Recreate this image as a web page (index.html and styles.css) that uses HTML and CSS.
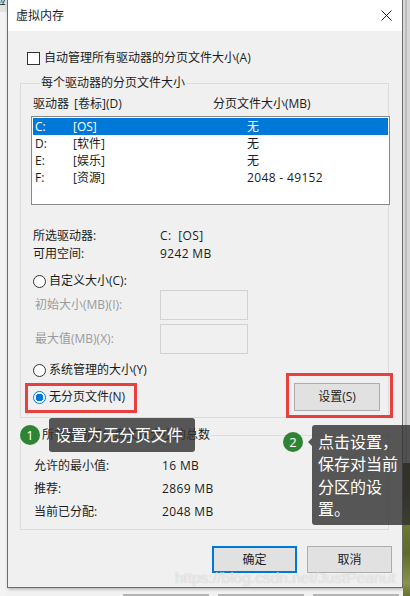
FILE: index.html
```html
<!DOCTYPE html>
<html lang="zh-CN">
<head>
<meta charset="utf-8">
<title>虚拟内存</title>
<link rel="stylesheet" href="styles.css">
</head>
<body>
<div class="page">
  <div class="strip-left"><span class="behind-glyph">检</span></div>
  <div class="center">
    <div class="dialog">
      <div class="titlebar">
        <span>虚拟内存</span>
        <svg class="close" width="11" height="11" viewBox="0 0 11 11"><path d="M.5 .5L10.500 10.500M10.500 .5L.5 10.500" fill="none" stroke="#222" stroke-width="1"/></svg>
      </div>
      <div class="content">
        <label class="check-row"><span class="checkbox"></span>自动管理所有驱动器的分页文件大小(A)</label>
        <fieldset class="group group-a">
          <legend>每个驱动器的分页文件大小</legend>
          <div class="list-head"><span>驱动器 [卷标](D)</span><span>分页文件大小(MB)</span></div>
          <div class="listbox">
            <div class="drive selected"><span>C:</span><span>[OS]</span><span>无</span></div>
            <div class="drive"><span>D:</span><span>[软件]</span><span>无</span></div>
            <div class="drive"><span>E:</span><span>[娱乐]</span><span>无</span></div>
            <div class="drive"><span>F:</span><span>[资源]</span><span>2048 - 49152</span></div>
          </div>
          <div class="info first"><span>所选驱动器:</span><span>C:&nbsp; [OS]</span></div>
          <div class="info"><span>可用空间:</span><span>9242 MB</span></div>
          <div class="radio-row custom"><span class="radio"></span>自定义大小(C):</div>
          <div class="size-row top"><span>初始大小(MB)(I):</span><span class="input"></span></div>
          <div class="size-row"><span>最大值(MB)(X):</span><span class="input"></span></div>
          <div class="radio-row system"><span class="radio"></span>系统管理的大小(Y)</div>
          <div class="last-row">
            <div class="radio-row"><span class="radio on"></span>无分页文件(N)</div>
            <button class="btn set-btn" type="button">设置(S)</button>
          </div>
        </fieldset>
        <fieldset class="group group-b">
          <legend>所有驱动器分页文件大小的总数</legend>
          <div class="total"><span>允许的最小值:</span><span>16 MB</span></div>
          <div class="total"><span>推荐:</span><span>2869 MB</span></div>
          <div class="total"><span>当前已分配:</span><span>2048 MB</span></div>
        </fieldset>
        <div class="actions">
          <button class="btn ok" type="button">确定</button>
          <button class="btn" type="button">取消</button>
        </div>
      </div>
    </div>
    <div class="taskrow"><i></i><i></i><i></i></div>
  </div>
  <div class="strip-right"><div class="strip-light"></div><div class="strip-photo"></div></div>

  <div class="mark mark-radio"></div>
  <div class="mark mark-set"></div>
  <div class="badge badge-1">1</div>
  <div class="tip tip-1">设置为无分页文件</div>
  <div class="badge badge-2">2</div>
  <div class="tip tip-2">点击设置，<br>保存对当前<br>分区的设<br>置。</div>
  <div class="watermark">https://blog.csdn.net/JustPeanut</div>
</div>
</body>
</html>
```
FILE: styles.css
```css
* { box-sizing: border-box; }
html, body { margin: 0; padding: 0; }
body {
  width: 410px;
  height: 596px;
  overflow: hidden;
  background: #f1f1f1;
  font: 12px/16px "Open Sans", "Noto Sans CJK SC", sans-serif;
  color: #1c1c1c;
}
.page {
  position: relative;
  width: 410px;
  height: 596px;
  overflow: hidden;
  display: grid;
  grid-template-columns: 7px 396px 7px;
}
.strip-left {
  background: linear-gradient(#e3e3e3 0 12px, #f3f3f3 12px);
  overflow: hidden;
}
.behind-glyph {
  display: block;
  margin: -5px 0 0 -6px;
  width: 13px;
  font-size: 12px;
  line-height: 12px;
  color: #222;
}
.center { display: flex; flex-direction: column; }
.dialog {
  height: 588px;
  background: #f0f0f0;
  border: 1px solid #6d6d6d;
  border-top: 0;
  box-shadow: 1px 1px 3px rgba(0, 0, 0, .3);
}
.titlebar {
  height: 31px;
  background: #fff;
  padding: 0 10px 0 8px;
  display: flex;
  align-items: center;
  justify-content: space-between;
  line-height: 30px;
}
.close { display: block; }
.content { padding: 20px 13px 0 12px; }
.check-row {
  display: flex;
  align-items: center;
  height: 14px;
  padding-left: 7px;
  gap: 4px;
}
.checkbox {
  width: 13px;
  height: 13px;
  background: #fff;
  border: 1px solid #333;
}
.group {
  margin: 0;
  min-width: 0;
  width: 369px;
  border: 1px solid #dcdcdc;
  padding: 0 8px 6px 12px;
}
.group legend {
  margin-left: 7px;
  padding: 0 1px 0 1px;
  line-height: 16px;
}
.group-a { margin-top: 10px; height: 343px; }
.group-b { margin-top: 9px; height: 103px; padding: 11px 8px 0 13px; }
.list-head {
  display: grid;
  grid-template-columns: 180px 1fr;
  margin-top: 5px;
  height: 16px;
  word-spacing: 2px;
}
.listbox {
  margin: 4px 0 0 -2px;
  width: 359px;
  height: 89px;
  background: #fff;
  border: 1px solid #868a8f;
  padding: 1px;
}
.drive {
  display: grid;
  grid-template-columns: 38px 174px 1fr;
  height: 17px;
  padding-left: 2px;
  line-height: 17px;
}
.drive span:last-child,
.info span:last-child,
.total span:last-child { letter-spacing: .35px; }
.drive.selected { background: #0078d7; color: #fff; }
.info {
  display: grid;
  grid-template-columns: 127px 1fr;
  height: 18px;
  line-height: 18px;
}
.info.first { margin-top: 22px; }
.radio-row {
  display: flex;
  align-items: center;
  gap: 3px;
  height: 16px;
}
.radio-row.custom { margin-top: 10px; }
.radio-row.system { margin-top: 8px; }
.radio {
  width: 13px;
  height: 13px;
  background: #fff;
  border: 1px solid #333;
  border-radius: 50%;
  flex: none;
}
.radio.on {
  border-color: #0078d7;
  background: radial-gradient(circle, #0078d7 0 3.6px, #fff 4px);
}
.size-row {
  display: flex;
  align-items: center;
  justify-content: space-between;
  width: 215px;
  height: 30px;
  margin-top: 4px;
  padding-left: 2px;
  color: #9b9b9b;
}
.size-row.top { margin-top: 1px; }
.input {
  width: 88px;
  height: 30px;
  background: #f0f0f0;
  border: 1px solid #d2d2d2;
}
.last-row {
  display: flex;
  align-items: center;
  justify-content: space-between;
  height: 28px;
  margin-top: 5px;
}
.btn {
  font: inherit;
  color: inherit;
  width: 85px;
  height: 27px;
  margin: 0;
  padding: 0;
  background: #e1e1e1;
  border: 1px solid #adadad;
}
.set-btn { width: 86px; height: 28px; }
.btn.ok { border: 2px solid #0078d7; }
.total {
  display: grid;
  grid-template-columns: 128px 1fr;
  height: 23px;
  line-height: 23px;
}
.actions {
  display: flex;
  justify-content: flex-end;
  gap: 10px;
  margin: 16px -3px 0 0;
}
.taskrow {
  display: flex;
  gap: 9px;
  padding: 6px 0 0 116px;
}
.taskrow i {
  width: 86px;
  height: 2px;
  background: #b4b4b4;
}
.strip-right { display: flex; flex-direction: column; }
.strip-light {
  height: 463px;
  background: linear-gradient(90deg, #d8d8d8 0 2px, #bdbdbd 2px 4px, #d6d6d6 4px);
}
.strip-photo {
  flex: 1;
  background: linear-gradient(#3d3a0c 0, #454511 30px, #6b7a2a 60px, #5d6b28 90px, #8b9448 120px, #67712e 133px);
}
.mark {
  position: absolute;
  border: 3px solid #e8403f;
}
.mark-radio { left: 25px; top: 383px; width: 112px; height: 30px; }
.mark-set { left: 286px; top: 373px; width: 107px; height: 45px; }
.badge {
  position: absolute;
  width: 20px;
  height: 20px;
  border-radius: 50%;
  background: #2e8435;
  color: #fff;
  text-align: center;
  line-height: 20px;
  font-size: 13px;
}
.badge-1 { left: 20px; top: 425px; }
.badge-2 { left: 283px; top: 432px; }
.tip {
  position: absolute;
  background: rgba(48, 48, 48, .8);
  color: #fff;
  font-size: 16px;
  border-radius: 3px;
}
.tip-1 {
  left: 49px;
  top: 418px;
  width: 146px;
  height: 34px;
  padding-left: 6px;
  line-height: 34px;
}
.tip-2 {
  left: 312px;
  top: 425px;
  width: 98px;
  height: 100px;
  padding: 6px 0 0 6px;
  line-height: 22.300px;
  border-radius: 3px 0 0 3px;
}
.tip-2::before {
  content: "";
  position: absolute;
  left: -4px;
  top: 13px;
  border: 4px solid transparent;
  border-left: 0;
  border-right-color: rgba(48, 48, 48, .8);
}
.watermark {
  position: absolute;
  left: 175px;
  top: 569px;
  font: 15.500px/18px "Liberation Sans", sans-serif;
  white-space: nowrap;
  color: rgba(255, 255, 255, .6);
  text-shadow: 0 0 1px rgba(140, 140, 140, .5);
}
```
